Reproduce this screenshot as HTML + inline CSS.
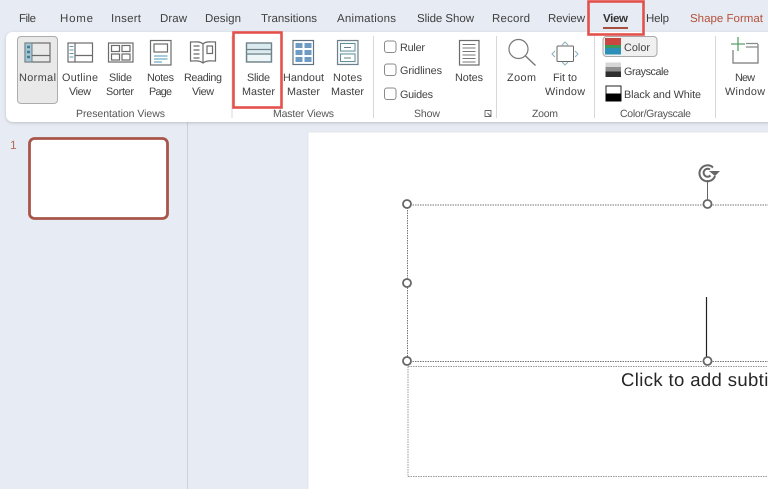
<!DOCTYPE html>
<html><head><meta charset="utf-8"><style>
html,body{margin:0;padding:0;width:768px;height:489px;overflow:hidden;background:#e7ebf3}
svg{display:block;filter:blur(.3px)}
text{font-family:"Liberation Sans",sans-serif;font-size:10.8px;fill:#404040;text-rendering:geometricPrecision}
.tabs text{font-size:11.5px}
.g{font-size:10.5px;fill:#555}
.i{fill:none;stroke:#6b6b6b;stroke-width:1.2}
</style></head><body>
<svg width="768" height="489" viewBox="0 0 768 489" xmlns="http://www.w3.org/2000/svg">
<defs><filter id="s" x="-5%" y="-10%" width="110%" height="125%"><feDropShadow dx="0" dy="1" stdDeviation="1.5" flood-color="#000" flood-opacity=".18"/></filter></defs>
<rect width="768" height="489" fill="#e7ebf3"/>
<!-- tabs -->
<g class="tabs">
<text x="19" y="22" textLength="17">File</text>
<text x="60" y="22" textLength="33">Home</text>
<text x="111" y="22" textLength="30">Insert</text>
<text x="160" y="22" textLength="27">Draw</text>
<text x="205" y="22" textLength="36">Design</text>
<text x="261" y="22" textLength="56">Transitions</text>
<text x="337" y="22" textLength="59">Animations</text>
<text x="417" y="22" textLength="57">Slide Show</text>
<text x="492" y="22" textLength="38">Record</text>
<text x="548" y="22" textLength="37">Review</text>
<text x="603" y="22" textLength="25" style="font-weight:bold;fill:#333">View</text>
<text x="646" y="22" textLength="23">Help</text>
<text x="690" y="22" textLength="73" style="fill:#b5503a">Shape Format</text>
</g>
<!-- panes -->
<line x1="187.500" y1="122" x2="187.500" y2="489" stroke="#cdd0d6"/>
<rect x="308" y="132" width="470" height="370" fill="#fff" stroke="#dfe1e6" stroke-width=".7"/>
<!-- ribbon -->
<rect x="6" y="32" width="780" height="90" rx="7" fill="#fff" filter="url(#s)"/>
<g stroke="#d8d8d8"><line x1="232" y1="36" x2="232" y2="118"/><line x1="373.500" y1="36" x2="373.500" y2="118"/><line x1="496.500" y1="36" x2="496.500" y2="118"/><line x1="594.500" y1="36" x2="594.500" y2="118"/><line x1="715.500" y1="36" x2="715.500" y2="118"/></g>
<rect x="17.500" y="36.500" width="40" height="67" rx="3.500" fill="#e9e9e9" stroke="#adadad"/>
<rect x="603" y="36.500" width="54" height="20" rx="3.500" fill="#f0f0f0" stroke="#a9a9a9"/>

<!-- Normal icon -->
<rect x="25" y="43" width="25" height="19" fill="#fff" class="i"/>
<rect x="25" y="43" width="7" height="19" fill="#a9c6d3" stroke="#6b7f88"/>
<path d="M32 55.500H50" class="i"/>
<path d="M27 47h3M27 52h3M27 57h3" stroke="#3f7f95" stroke-width="2.400"/>
<!-- Outline icon -->
<rect x="68" y="43" width="24.500" height="19" fill="#fff" class="i"/>
<path d="M75 43v19" class="i"/><path d="M75 55.500H92" class="i"/>
<path d="M69.500 46.500h4M69.500 50h4M69.500 53.500h4M69.500 57h4" stroke="#5d9aa8"/>
<!-- Sorter -->
<rect x="108.500" y="43" width="24.500" height="19" class="i"/>
<rect x="111.500" y="45.500" width="8" height="6" class="i"/><rect x="122" y="45.500" width="8" height="6" class="i"/>
<rect x="111.500" y="54" width="8" height="6" class="i"/><rect x="122" y="54" width="8" height="6" class="i"/>
<!-- Notes page -->
<rect x="150.500" y="40.500" width="20.500" height="24.500" class="i"/>
<rect x="154" y="44" width="13.500" height="8" class="i"/>
<path d="M154 56h13.500M154 59h13.500M154 62h8" stroke="#4e97b5"/>
<!-- Reading -->
<path d="M203 63C199 60 195 61 190.500 61V42C195 42 200 41 203 44C206 41 211 42 215.500 42V61C211 61 207 60 203 63ZM203 44V63" class="i"/>
<path d="M193.500 46h6M193.500 50h6M193.500 54h6M193.500 58h6" class="i" stroke-width="1"/>
<rect x="207" y="46" width="5.500" height="7.500" class="i" stroke-width="1"/>
<!-- Slide Master -->
<rect x="246.500" y="43" width="25" height="19" fill="#dcebf0" stroke="#6e8288" stroke-width="1.400"/>
<path d="M247 49.500h24M247 54h24" stroke="#6e8288" stroke-width="1.200"/>
<rect x="248" y="55" width="22" height="6" fill="#eef6f8"/>
<!-- Handout -->
<rect x="293" y="40.500" width="20.500" height="24" fill="#fff" stroke="#5f7480" stroke-width="1.200"/>
<g fill="#6d9bc4"><rect x="295.500" y="43" width="7" height="5"/><rect x="304.500" y="43" width="7" height="5"/><rect x="295.500" y="50" width="7" height="5"/><rect x="304.500" y="50" width="7" height="5"/><rect x="295.500" y="57" width="7" height="5"/><rect x="304.500" y="57" width="7" height="5"/></g>
<!-- Notes master -->
<rect x="337.500" y="40.500" width="20.500" height="24" fill="#f4f8f9" stroke="#708088" stroke-width="1.200"/>
<rect x="340.500" y="43.500" width="14.500" height="7.500" fill="#fff" stroke="#5d8f98"/><rect x="340.500" y="54" width="14.500" height="7.500" fill="#fff" stroke="#5d8f98"/>
<path d="M344 47.500h7M344 58h7" stroke="#6d7f85"/>
<!-- checkboxes -->
<rect x="384.500" y="41" width="11.500" height="11.500" rx="2.500" fill="#fff" stroke="#8a8a8a"/>
<rect x="384.500" y="64" width="11.500" height="11.500" rx="2.500" fill="#fff" stroke="#8a8a8a"/>
<rect x="384.500" y="88" width="11.500" height="11.500" rx="2.500" fill="#fff" stroke="#8a8a8a"/>
<!-- Notes icon -->
<rect x="459.500" y="40.500" width="19.500" height="24.500" class="i"/>
<path d="M462.500 44.500h13M462.500 48h13M462.500 51.500h13M462.500 55h13M462.500 58.500h13M462.500 62h13" stroke="#777" stroke-width=".9"/>
<!-- Zoom icon -->
<circle cx="518.500" cy="49" r="9.500" fill="none" stroke="#777" stroke-width="1.200"/>
<path d="M525.500 56l10 9.500" stroke="#777" stroke-width="1.400"/>
<!-- Fit icon -->
<rect x="557" y="46" width="16.500" height="15.500" rx="1" fill="#fff" stroke="#666"/>
<g fill="none" stroke="#8fb5c0" stroke-width="1.100"><path d="M562 45l3-3 3 3M562 62l3 3 3-3M555 51l-3 3 3 3M575 51l3 3-3 3"/></g>
<!-- Colour icons -->
<rect x="605" y="38" width="16" height="8.500" fill="#c9473f"/><rect x="605" y="45" width="16" height="3" fill="#3a9a5d"/><rect x="605" y="48" width="16" height="6.500" fill="#2c8fb8"/>
<rect x="605.500" y="62.500" width="15.500" height="5" fill="#d6d6d6"/><rect x="605.500" y="67" width="15.500" height="5" fill="#8f8f8f"/><rect x="605.500" y="71.500" width="15.500" height="5.500" fill="#2f2f2f"/>
<rect x="606" y="86" width="15" height="8" fill="#fff" stroke="#222"/><rect x="605.500" y="93.500" width="16" height="8" fill="#000"/>
<!-- New window -->
<path d="M733 50v13h25V44" class="i" style="stroke:#777"/>
<path d="M746 43.500h12M746 47h12" stroke="#8a8a8a" stroke-width="1.200"/>
<path d="M738 37v14M731 44h14" stroke="#5aa06c" stroke-width="1.300"/>

<!-- labels -->
<text x="19" y="81" textLength="37">Normal</text>
<text x="62" y="81" textLength="36">Outline</text><text x="69" y="95" textLength="22">View</text>
<text x="109" y="81" textLength="23">Slide</text><text x="106" y="95" textLength="28">Sorter</text>
<text x="147" y="81" textLength="27">Notes</text><text x="149" y="95" textLength="23">Page</text>
<text x="184" y="81" textLength="38">Reading</text><text x="192" y="95" textLength="22">View</text>
<text x="247" y="81" textLength="23">Slide</text><text x="242" y="95" textLength="33">Master</text>
<text x="283" y="81" textLength="41">Handout</text><text x="287" y="95" textLength="33">Master</text>
<text x="333" y="81" textLength="29">Notes</text><text x="331" y="95" textLength="33">Master</text>
<text x="400" y="51" textLength="25">Ruler</text>
<text x="400" y="74" textLength="42">Gridlines</text>
<text x="400" y="98" textLength="33">Guides</text>
<text x="455" y="81" textLength="28">Notes</text>
<text x="507" y="81" textLength="29">Zoom</text>
<text x="553" y="81" textLength="24">Fit to</text><text x="545" y="95" textLength="40">Window</text>
<text x="624" y="51" textLength="26">Color</text>
<text x="624" y="75" textLength="45">Grayscale</text>
<text x="624" y="98" textLength="77">Black and White</text>
<text x="735" y="81" textLength="20">New</text><text x="725" y="95" textLength="40">Window</text>

<text class="g" x="76" y="117" textLength="89">Presentation Views</text>
<text class="g" x="273" y="117" textLength="61">Master Views</text>
<text class="g" x="414" y="117" textLength="26">Show</text>
<text class="g" x="532" y="117" textLength="26">Zoom</text>
<text class="g" x="620" y="117" textLength="71">Color/Grayscale</text>
<path d="M485 110.500h6v3M485 110.500v6h3M487.500 113l3.500 3.500M491 113.500v3h-3" fill="none" stroke="#666" stroke-width=".9"/>

<!-- red highlights -->
<rect x="233.500" y="32.500" width="48" height="75" fill="none" stroke="#e4514d" stroke-width="2.600"/>
<rect x="588.500" y="1.500" width="55" height="33" fill="none" stroke="#e4514d" stroke-width="2.600"/>
<line x1="603" y1="28" x2="628" y2="28" stroke="#a8503f" stroke-width="2"/>

<!-- thumbnail -->
<text x="10" y="149" style="font-size:12px;fill:#b86a57">1</text>
<rect x="29.500" y="138.500" width="138" height="80" rx="5" fill="#fff" stroke="#a9564a" stroke-width="2.800"/>

<!-- placeholders -->
<g fill="none" stroke="#777" stroke-width="1" stroke-dasharray="1.500 1">
<path d="M407.500 205H790M407.500 205V361M407.500 361.500H790"/>
<path d="M408 366.500H790M408 366.500V477M408 476.500H790" stroke="#999"/>
</g>
<line x1="707.500" y1="180" x2="707.500" y2="200" stroke="#666"/>
<line x1="706.500" y1="297" x2="706.500" y2="357" stroke="#222" stroke-width="1.200"/>
<g fill="#fff" stroke="#666" stroke-width="1.800">
<circle cx="407" cy="204" r="4"/><circle cx="707.500" cy="204" r="4"/><circle cx="407" cy="283" r="4"/><circle cx="407" cy="361" r="4"/><circle cx="707.500" cy="361" r="4"/>
</g>
<!-- rotate handle -->
<g fill="none" stroke="#666" stroke-width="2">
<path d="M715 176A8 8 0 1 1 713 167.500"/><path d="M710.500 175.500A4 4 0 1 1 710 169.500"/>
</g>
<path d="M709 171h11l-5 5z" fill="#666"/>
<text x="621" y="386" textLength="168" style="font-size:18.500px;fill:#262626">Click to add subtitle</text>
</svg>
</body></html>
